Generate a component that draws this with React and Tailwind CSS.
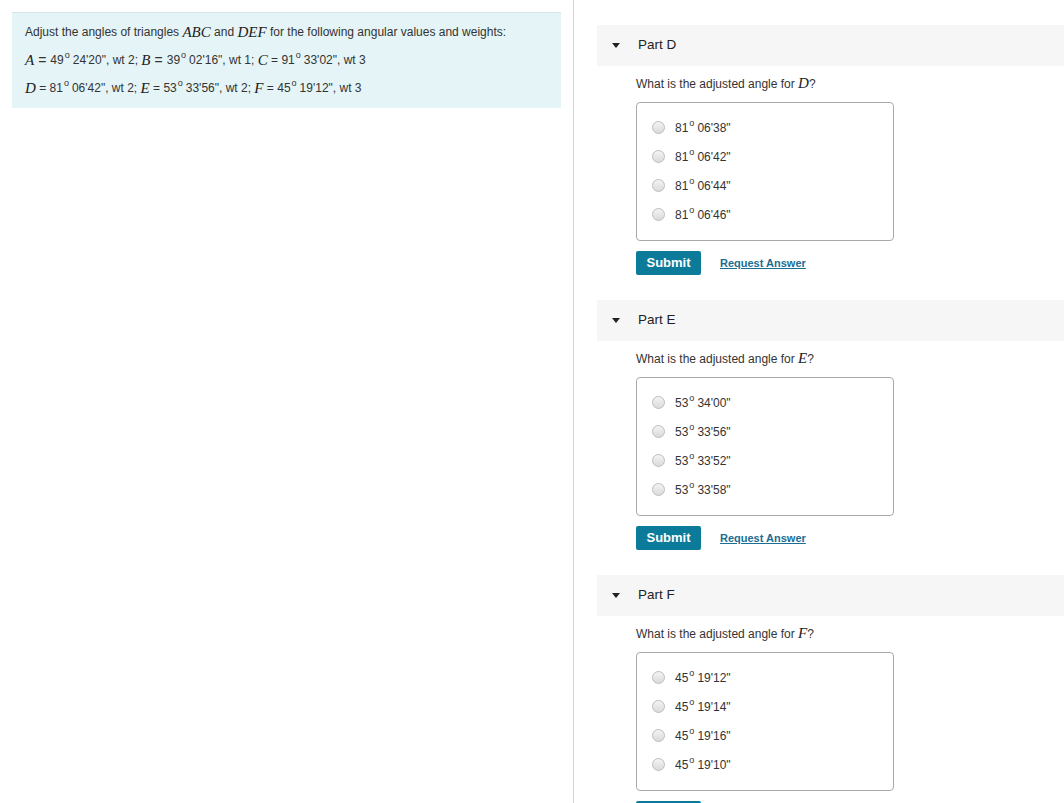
import React from 'react';

const parts = [
  {
    label: 'D',
    options: ['81° 06\'38"', '81° 06\'42"', '81° 06\'44"', '81° 06\'46"'],
  },
  {
    label: 'E',
    options: ['53° 34\'00"', '53° 33\'56"', '53° 33\'52"', '53° 33\'58"'],
  },
  {
    label: 'F',
    options: ['45° 19\'12"', '45° 19\'14"', '45° 19\'16"', '45° 19\'10"'],
  },
];

const M = ({ children }) => (
  <span className="italic text-[15px] font-['Liberation_Serif',serif] text-[#222]">{children}</span>
);

const Deg = ({ d, rest }) => (
  <span className="inline-flex items-start">
    {d}
    <span className="text-[9px] leading-none ml-[1px] mr-[3px]">o</span>
    {rest}
  </span>
);

const Radio = () => (
  <span className="w-[13px] h-[13px] rounded-full border border-[#bdbdbd] bg-gradient-to-b from-[#f4f4f4] to-[#dadada] inline-block shrink-0" />
);

const Part = ({ part }) => (
  <div className="mb-[25px]">
    <div className="bg-[#f6f6f6] h-[41px] flex items-center pl-[15px]">
      <span className="w-0 h-0 border-l-[4px] border-r-[4px] border-t-[5px] border-l-transparent border-r-transparent border-t-[#222] mr-[18px]" />
      <span className="text-[13.5px] text-[#222]">Part {part.label}</span>
    </div>
    <div className="pl-[39px] pt-[8px]">
      <p className="text-[12px] text-[#333] h-[19px] flex items-center">
        What is the adjusted angle for&nbsp;<M>{part.label}</M>?
      </p>
      <div className="mt-[9px] w-[258px] h-[139px] border border-[#aaa] rounded-[4px] pt-[10px] pl-[15px]">
        {part.options.map((o) => {
          const [d, rest] = o.split('° ');
          return (
            <div key={o} className="h-[29px] flex items-center gap-[10px] text-[12px] text-[#333]">
              <Radio />
              <Deg d={d} rest={rest} />
            </div>
          );
        })}
      </div>
      <div className="mt-[10px] flex items-center">
        <button className="bg-[#0c7b9a] text-white text-[13px] font-bold h-[24px] w-[65px] rounded-[2px]">
          Submit
        </button>
        <a className="ml-[19px] text-[11px] font-bold text-[#1a6e92] underline">Request Answer</a>
      </div>
    </div>
  </div>
);

export default function App() {
  return (
    <div className="w-[1064px] h-[803px] overflow-hidden bg-white flex font-['Liberation_Sans',Arial,sans-serif]">
      <div className="w-[574px] shrink-0 border-r border-[#c9d7e2] pt-[12px] pl-[12px] pr-[12px]">
        <div className="bg-[#e5f4f6] border-t border-[#d6e4e8] pl-[13px] pt-[5px] pb-[6px] text-[12px] text-[#333]">
          <p className="h-[28px] flex items-center">
            Adjust the angles of triangles&nbsp;<M>ABC</M>&nbsp;and&nbsp;<M>DEF</M>&nbsp;for the following angular values and weights:
          </p>
          <p className="h-[28px] flex items-center">
            <M>A</M>
            <span className="mx-[4px] text-[14px]">=</span>
            <Deg d="49" rest={'24\'20", wt 2;'} />
            &nbsp;<M>B</M>
            <span className="mx-[4px] text-[14px]">=</span>
            <Deg d="39" rest={'02\'16", wt 1;'} />
            &nbsp;<M>C</M>&nbsp;=&nbsp;
            <Deg d="91" rest={'33\'02", wt 3'} />
          </p>
          <p className="h-[28px] flex items-center">
            <M>D</M>&nbsp;=&nbsp;
            <Deg d="81" rest={'06\'42", wt 2;'} />
            &nbsp;<M>E</M>&nbsp;=&nbsp;
            <Deg d="53" rest={'33\'56", wt 2;'} />
            &nbsp;<M>F</M>&nbsp;=&nbsp;
            <Deg d="45" rest={'19\'12", wt 3'} />
          </p>
        </div>
      </div>
      <div className="flex-1 pl-[23px] pt-[25px]">
        {parts.map((p) => (
          <Part key={p.label} part={p} />
        ))}
      </div>
    </div>
  );
}
